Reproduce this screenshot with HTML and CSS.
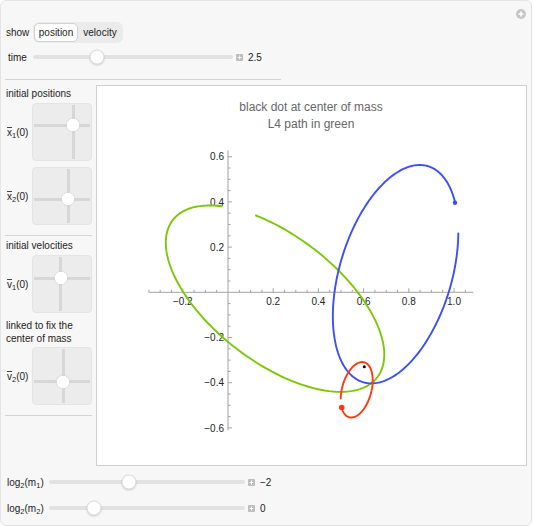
FILE: index.html
```html
<!DOCTYPE html>
<html>

<head lang="en">
    <meta charset="UTF-8">
    <title>L4 orbit</title>
    <link rel="stylesheet" href="styles.css">
</head>

<body>
    <div class="panel">
        <svg class="add-btn" width="10" height="10" viewBox="0 0 10 10">
            <circle cx="5" cy="5" r="5" fill="#c6c6c6" />
            <path d="M5 2.5v5M2.5 5h5" stroke="#fff" stroke-width="1.6" />
        </svg>

        <div class="row show-row">
            <span class="label">show</span>
            <div class="setter">
                <span class="opt active">position</span>
                <span class="opt">velocity</span>
            </div>
        </div>

        <div class="row slider-row time-row">
            <span class="label">time</span>
            <div class="track"><span class="thumb" style="left: 32%"></span></div>
            <svg class="step" width="7" height="7" viewBox="0 0 7 7">
                <rect width="7" height="7" rx="1" fill="#bdbdbd" />
                <path d="M3.5 1.5v4M1.5 3.5h4" stroke="#fff" stroke-width="1" />
            </svg>
            <span class="value">2.5</span>
        </div>

        <div class="rule"></div>

        <div class="main">
            <div class="side">
                <div class="caption first">initial positions</div>
                <div class="pad-row">
                    <span class="pad-label"><span class="vec">x</span><sub>1</sub>(0)</span>
                    <div class="pad" style="--x: 69%; --y: 38%"><i class="v"></i><i class="h"></i><b></b></div>
                </div>
                <div class="pad-row next">
                    <span class="pad-label"><span class="vec">x</span><sub>2</sub>(0)</span>
                    <div class="pad" style="--x: 60.5%; --y: 56%"><i class="v"></i><i class="h"></i><b></b></div>
                </div>
                <div class="side-rule"></div>

                <div class="caption">initial velocities</div>
                <div class="pad-row">
                    <span class="pad-label"><span class="vec">v</span><sub>1</sub>(0)</span>
                    <div class="pad" style="--x: 48%; --y: 40%"><i class="v"></i><i class="h"></i><b></b></div>
                </div>
                <div class="note">linked to fix the<br>center of mass</div>
                <div class="pad-row">
                    <span class="pad-label"><span class="vec">v</span><sub>2</sub>(0)</span>
                    <div class="pad" style="--x: 52%; --y: 60%"><i class="v"></i><i class="h"></i><b></b></div>
                </div>
                <div class="side-rule"></div>
            </div>

            <div class="plot">
                <svg id="plot" width="429" height="379" viewBox="97 86 429 379">
                    <text class="title" x="311" y="107">black dot at center of mass</text>
                    <text class="title" x="311" y="124">L4 path in green</text>
                    <g id="axes"></g>
                    <g id="curves"></g>
                </svg>
            </div>
        </div>

        <div class="row slider-row mass-row">
            <span class="label">log<sub>2</sub>(m<sub>1</sub>)</span>
            <div class="track"><span class="thumb" style="left: 41%"></span></div>
            <svg class="step" width="7" height="7" viewBox="0 0 7 7">
                <rect width="7" height="7" rx="1" fill="#bdbdbd" />
                <path d="M3.5 1.5v4M1.5 3.5h4" stroke="#fff" stroke-width="1" />
            </svg>
            <span class="value">−2</span>
        </div>
        <div class="row slider-row mass-row second">
            <span class="label">log<sub>2</sub>(m<sub>2</sub>)</span>
            <div class="track"><span class="thumb" style="left: 23%"></span></div>
            <svg class="step" width="7" height="7" viewBox="0 0 7 7">
                <rect width="7" height="7" rx="1" fill="#bdbdbd" />
                <path d="M3.5 1.5v4M1.5 3.5h4" stroke="#fff" stroke-width="1" />
            </svg>
            <span class="value">0</span>
        </div>
    </div>
    <script src="plot.js"></script>
</body>

</html>
```

FILE: styles.css
```css
* {
    padding: 0;
    margin: 0;
    box-sizing: border-box;
}

body {
    font-family: "Liberation Sans", Arial, sans-serif;
    font-size: 10px;
    color: #222;
    background: #ffffff;
}

.panel {
    position: relative;
    width: 532px;
    height: 526px;
    padding: 0 4px;
    background: #f7f7f7;
    border: 1px solid #e4e4e4;
    border-radius: 6px;
}

.add-btn {
    position: absolute;
    top: 8px;
    right: 5px;
}

.row {
    display: flex;
    align-items: center;
}

sub {
    font-size: 7.5px;
    line-height: 0;
    vertical-align: -2px;
}

/* 顶部的 show 切换 */
.show-row {
    margin-top: 21px;
    height: 21px;
}

.show-row .label {
    width: 28px;
    padding-left: 1px;
}

.setter {
    display: flex;
    width: 90px;
    height: 21px;
    padding: 1px;
    background: #ebebeb;
    border-radius: 6px;
}

.opt {
    width: 44px;
    line-height: 19px;
    text-align: center;
    color: #222;
}

.opt.active {
    background: #ffffff;
    border: 1px solid #d2d2d2;
    border-radius: 5px;
    line-height: 17px;
}

/* 滑块 */
.slider-row {
    height: 16px;
}

.time-row {
    margin-top: 6px;
}

.time-row .label {
    width: 28px;
    padding-left: 3px;
}

.track {
    position: relative;
    height: 4px;
    background: #e2e2e2;
    border-radius: 2px;
}

.time-row .track {
    width: 200px;
}

.thumb {
    position: absolute;
    top: 50%;
    width: 15px;
    height: 15px;
    background: #ffffff;
    border: 1px solid #dadada;
    border-radius: 50%;
    box-shadow: 0 1px 2px rgba(0, 0, 0, .15);
    transform: translate(-50%, -50%);
}

.step {
    margin-left: 3px;
}

.value {
    margin-left: 5px;
}

.rule {
    width: 276px;
    height: 1px;
    margin-top: 14px;
    background: #d4d4d4;
}

/* 中间：左侧控制 + 图 */
.main {
    display: flex;
    margin-top: 5px;
}

.side {
    width: 88px;
}

.caption {
    line-height: 14px;
    margin-top: 3px;
    padding-left: 1px;
}

.caption.first {
    margin-top: 2px;
}

.pad-row {
    display: flex;
    align-items: center;
    margin-top: 2px;
}

.pad-row.next {
    margin-top: 6px;
}

.pad-label {
    width: 27px;
    padding-left: 2px;
}

.vec {
    position: relative;
}

.vec::after {
    content: "";
    position: absolute;
    left: 0;
    top: 0;
    width: 5px;
    border-top: 1px solid #444;
}

.pad {
    position: relative;
    width: 60px;
    height: 58px;
    background: #ececec;
    border: 1px solid #e4e4e4;
    border-radius: 4px;
}

.pad .v {
    position: absolute;
    top: 1px;
    bottom: 1px;
    left: var(--x);
    width: 3px;
    margin-left: -1.5px;
    background: #d7d7d7;
}

.pad .h {
    position: absolute;
    left: 1px;
    right: 1px;
    top: var(--y);
    height: 3px;
    margin-top: -1.5px;
    background: #d7d7d7;
}

.pad b {
    position: absolute;
    left: var(--x);
    top: var(--y);
    width: 13px;
    height: 13px;
    background: #ffffff;
    border-radius: 50%;
    box-shadow: 0 0 1px rgba(0, 0, 0, .3);
    transform: translate(-50%, -50%);
}

.note {
    margin-top: 6px;
    line-height: 13px;
    padding-left: 1px;
}

.side-rule {
    width: 87px;
    height: 1px;
    margin-top: 10px;
    background: #d4d4d4;
}

.plot {
    width: 431px;
    height: 381px;
    margin-left: 3px;
    background: #ffffff;
    border: 1px solid #cfcfcf;
}

.plot svg {
    display: block;
}

.plot text {
    font-family: "Liberation Sans", Arial, sans-serif;
    font-size: 10px;
    fill: #222;
}

.plot .title {
    font-size: 12px;
    fill: #666;
    text-anchor: middle;
    dominant-baseline: central;
}

/* 底部质量滑块 */
.mass-row {
    margin-top: 8px;
}

.mass-row.second {
    margin-top: 10px;
}

.mass-row .label {
    width: 44px;
    padding-left: 2px;
}

.mass-row .track {
    width: 196px;
}
```

FILE: plot.js
```js
// 原点和比例（像素）
var ox = 228, oy = 292.3, unit = 226;
var ns = 'http://www.w3.org/2000/svg';
var axes = document.querySelector('#axes');
var curves = document.querySelector('#curves');

function px(x) { return ox + unit * x; }
function py(y) { return oy - unit * y; }

function add(parent, tag, attrs, text) {
    var el = document.createElementNS(ns, tag);
    for (var k in attrs) el.setAttribute(k, attrs[k]);
    if (text) el.textContent = text;
    parent.appendChild(el);
    return el;
}

// 1. 坐标轴和刻度
var d = 'M' + px(-0.35) + ' ' + oy + 'H' + px(1.085) +
    'M' + ox + ' ' + py(0.628) + 'V' + py(-0.61);
for (var i = -7; i <= 21; i++) {
    if (i === 0) continue;
    var len = i % 4 === 0 ? 4 : 2.5;
    d += 'M' + px(i * 0.05) + ' ' + oy + 'v' + (-len);
}
for (var j = -12; j <= 12; j++) {
    if (j === 0) continue;
    var len2 = j % 4 === 0 ? 4 : 2.5;
    d += 'M' + ox + ' ' + py(j * 0.05) + 'h' + len2;
}
add(axes, 'path', { d: d, stroke: '#a3a3a3', 'stroke-width': 1, fill: 'none' });

[-0.2, 0.2, 0.4, 0.6, 0.8, 1.0].forEach(function (v) {
    var t = v < 0 ? '−' + (-v).toFixed(1) : v.toFixed(1);
    add(axes, 'text', { x: px(v), y: oy + 13, 'text-anchor': 'middle' }, t);
});
[0.6, 0.4, 0.2, -0.2, -0.4, -0.6].forEach(function (v) {
    var t = v < 0 ? '−' + (-v).toFixed(1) : v.toFixed(1);
    add(axes, 'text', { x: ox - 4, y: py(v) + 3.6, 'text-anchor': 'end' }, t);
});

// 2. 轨迹：对取样点做椭圆拟合，再按参数角画出来
function solve(M, r) {
    var n = r.length, i, j, k;
    for (i = 0; i < n; i++) {
        var p = i;
        for (k = i + 1; k < n; k++) if (Math.abs(M[k][i]) > Math.abs(M[p][i])) p = k;
        var tmp = M[i]; M[i] = M[p]; M[p] = tmp;
        var tr = r[i]; r[i] = r[p]; r[p] = tr;
        for (k = i + 1; k < n; k++) {
            var f = M[k][i] / M[i][i];
            for (j = i; j < n; j++) M[k][j] -= f * M[i][j];
            r[k] -= f * r[i];
        }
    }
    var x = [];
    for (i = n - 1; i >= 0; i--) {
        var s = r[i];
        for (j = i + 1; j < n; j++) s -= M[i][j] * x[j];
        x[i] = s / M[i][i];
    }
    return x;
}

function orbit(pts) {
    var mx = 0, my = 0, sc = 100;
    pts.forEach(function (p) { mx += p[0]; my += p[1]; });
    mx /= pts.length; my /= pts.length;

    // A x² + B xy + C y² + D x + E y = 1
    var M = [], r = [0, 0, 0, 0, 0];
    for (var a = 0; a < 5; a++) M.push([0, 0, 0, 0, 0]);
    pts.forEach(function (p) {
        var x = (p[0] - mx) / sc, y = (p[1] - my) / sc;
        var row = [x * x, x * y, y * y, x, y];
        for (var i = 0; i < 5; i++) {
            for (var j = 0; j < 5; j++) M[i][j] += row[i] * row[j];
            r[i] += row[i];
        }
    });
    var c = solve(M, r);
    var A = c[0], B = c[1], C = c[2], D = c[3], E = c[4];
    var den = 4 * A * C - B * B;
    var x0 = (B * E - 2 * C * D) / den, y0 = (B * D - 2 * A * E) / den;
    var th = 0.5 * Math.atan2(B, A - C), co = Math.cos(th), si = Math.sin(th);
    var F = A * x0 * x0 + B * x0 * y0 + C * y0 * y0 + D * x0 + E * y0 - 1;
    var A2 = A * co * co + B * co * si + C * si * si;
    var C2 = A * si * si - B * co * si + C * co * co;
    var ra = Math.sqrt(-F / A2), rb = Math.sqrt(-F / C2);

    function angle(p) {
        var dx = (p[0] - mx) / sc - x0, dy = (p[1] - my) / sc - y0;
        return Math.atan2((-dx * si + dy * co) / rb, (dx * co + dy * si) / ra);
    }

    // 沿取样点的顺序展开角度，得到起止角
    var t0 = angle(pts[0]), t = t0, prev = t0;
    for (var k = 1; k < pts.length; k++) {
        var cur = angle(pts[k]), step = cur - prev;
        while (step > Math.PI) step -= 2 * Math.PI;
        while (step < -Math.PI) step += 2 * Math.PI;
        t += step; prev = cur;
    }

    var out = [];
    for (var n = 0; n <= 240; n++) {
        var u = t0 + (t - t0) * n / 240;
        var ex = x0 + ra * Math.cos(u) * co - rb * Math.sin(u) * si;
        var ey = y0 + ra * Math.cos(u) * si + rb * Math.sin(u) * co;
        out.push((mx + ex * sc).toFixed(2) + ',' + (my + ey * sc).toFixed(2));
    }
    return out.join(' ');
}

var green = [[256, 216], [283.3, 230], [320, 255], [338.3, 270], [363.3, 296.7], [376.7, 323.3],
    [384, 350], [381.7, 370], [373.3, 381.7], [353.3, 388.3], [336.7, 390], [310, 386.7],
    [273.3, 378.3], [255, 360], [230, 341.7], [216.7, 330], [196.7, 310], [183.3, 291.7],
    [176.7, 280], [168.3, 263.3], [165.7, 241.7], [170, 225], [180, 213.3], [193.3, 205.7],
    [210, 205], [221.7, 206.7]];

var blue = [[455, 202.7], [451.7, 190], [443.3, 175], [433.3, 166.7], [421.7, 165], [406.7, 168.3],
    [386.7, 181.7], [370, 200], [356.7, 220], [346.7, 243.3], [338.3, 273.3], [333.3, 310],
    [333.3, 336.7], [338.3, 356.7], [348.3, 371.7], [360, 380], [371.7, 381.7], [390, 376.7],
    [410, 363.3], [426.7, 343.3], [440, 320], [448.3, 290], [453.3, 268], [457.3, 234]];

var red = [[341.7, 407.3], [345, 415], [353.3, 416.7], [363.3, 410], [370, 396.7], [372.3, 380],
    [370, 366.7], [365, 362.3], [358.3, 363.3], [350, 370], [343.3, 383.3], [340.7, 398.5]];

var line = { fill: 'none', 'stroke-width': 1.9, 'stroke-linecap': 'round' };
function draw(pts, color) {
    add(curves, 'polyline', Object.assign({ points: orbit(pts), stroke: color }, line));
}
draw(green, '#7dc608');
draw(blue, '#3a4ff6');
draw(red, '#ff3a10');

add(curves, 'circle', { cx: 455, cy: 202.7, r: 2.2, fill: '#3a4ff6' });
add(curves, 'circle', { cx: 341.7, cy: 407.5, r: 2.8, fill: '#ff3a10' });
add(curves, 'circle', { cx: 364.3, cy: 366.7, r: 1.5, fill: '#000' });
```
